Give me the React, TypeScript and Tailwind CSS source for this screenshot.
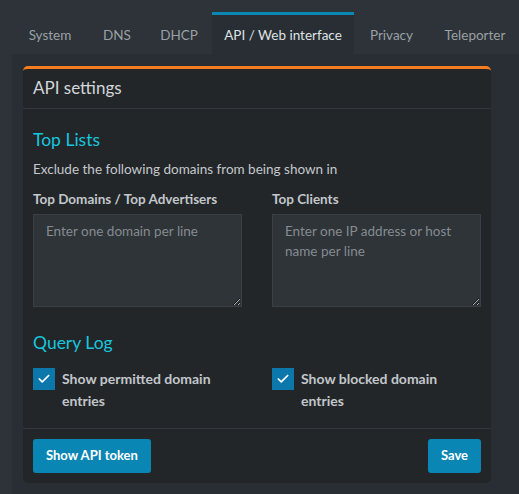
import { Check } from "lucide-react";

const tabs = [
  { label: "System", w: "w-[76px]" },
  { label: "DNS", w: "w-[58px]" },
  { label: "DHCP", w: "w-[66px]" },
  { label: "API / Web interface", w: "w-[142px]" },
  { label: "Privacy", w: "w-[75px]" },
  { label: "Teleporter", w: "w-[92px]" },
];

function CheckItem({ label }: { label: string }) {
  return (
    <label className="flex items-start gap-[7px]">
      <span className="flex h-[22px] w-[22px] shrink-0 items-center justify-center bg-[#0c77ab]">
        <Check className="h-[14px] w-[14px] text-white" strokeWidth={3} />
      </span>
      <span className="w-[170px] text-[14px] font-bold leading-[22px] text-[#c3c7cb]">{label}</span>
    </label>
  );
}

export default function App() {
  return (
    <div
      className="h-[494px] w-[519px] overflow-hidden bg-[#2d3338] pt-[12px]"
      style={{ fontFamily: "Lato, 'Noto Sans', sans-serif" }}
    >
      <div className="ml-[12px] flex h-[42px] items-stretch text-[13.5px]">
        {tabs.map((t) => {
          const active = t.label === "API / Web interface";
          return (
            <div
              key={t.label}
              className={
                active
                  ? `${t.w} flex shrink-0 items-center justify-center whitespace-nowrap border-t-[3px] border-[#0b87b5] bg-[#282e33] pt-[2px] text-[#dfe2e5]`
                  : `${t.w} flex shrink-0 items-center justify-center whitespace-nowrap border-t-[3px] border-transparent pt-[2px] text-[#9aa0a5]`
              }
            >
              {t.label}
            </div>
          );
        })}
      </div>
      <div className="ml-[12px] h-full bg-[#282e33] pl-[11px] pt-[12px]">
        <div className="w-[468px] overflow-hidden rounded-[5px] border-t-[3px] border-[#f47d22] bg-[#222629]">
          <div className="border-b border-[#32383d] px-[10px] pb-[9px] pt-[8px] text-[17px] leading-[22px] text-[#d3d6d9]">
            API settings
          </div>
          <div className="px-[10px] pt-[20px] pb-[16px]">
            <div className="text-[17.5px] leading-[22px] text-[#17c5de]">Top Lists</div>
            <div className="mt-[8px] text-[13.5px] leading-[20px] text-[#c4c8cc]">
              Exclude the following domains from being shown in
            </div>
            <div className="mt-[10px] grid grid-cols-2 gap-[30px]">
              <div>
                <div className="text-[13.5px] font-bold leading-[20px] text-[#c3c7cb]">
                  Top Domains / Top Advertisers
                </div>
                <textarea
                  className="mt-[5px] block h-[93px] w-[209px] border border-[#393f44] bg-[#2e3438] px-[12px] py-[6px] text-[13.5px] leading-[20px] text-[#c4c8cc] outline-none placeholder:text-[#858b90] [color-scheme:dark]"
                  placeholder="Enter one domain per line"
                />
              </div>
              <div>
                <div className="text-[13.5px] font-bold leading-[20px] text-[#c3c7cb]">Top Clients</div>
                <textarea
                  className="mt-[5px] block h-[93px] w-[209px] border border-[#393f44] bg-[#2e3438] px-[12px] py-[6px] text-[13.5px] leading-[20px] text-[#c4c8cc] outline-none placeholder:text-[#858b90] [color-scheme:dark]"
                  placeholder="Enter one IP address or host name per line"
                />
              </div>
            </div>
            <div className="mt-[25px] text-[17.5px] leading-[22px] text-[#17c5de]">Query Log</div>
            <div className="mt-[14px] grid grid-cols-2 gap-[30px]">
              <CheckItem label="Show permitted domain entries" />
              <CheckItem label="Show blocked domain entries" />
            </div>
          </div>
          <div className="flex justify-between border-t border-[#32383d] px-[10px] pt-[10px] pb-[10px]">
            <button className="h-[34px] rounded-[3px] bg-[#0a86b4] px-[13px] text-[13px] font-bold text-white">
              Show API token
            </button>
            <button className="h-[34px] rounded-[3px] bg-[#0a86b4] px-[13px] text-[13px] font-bold text-white">
              Save
            </button>
          </div>
        </div>
      </div>
    </div>
  );
}
